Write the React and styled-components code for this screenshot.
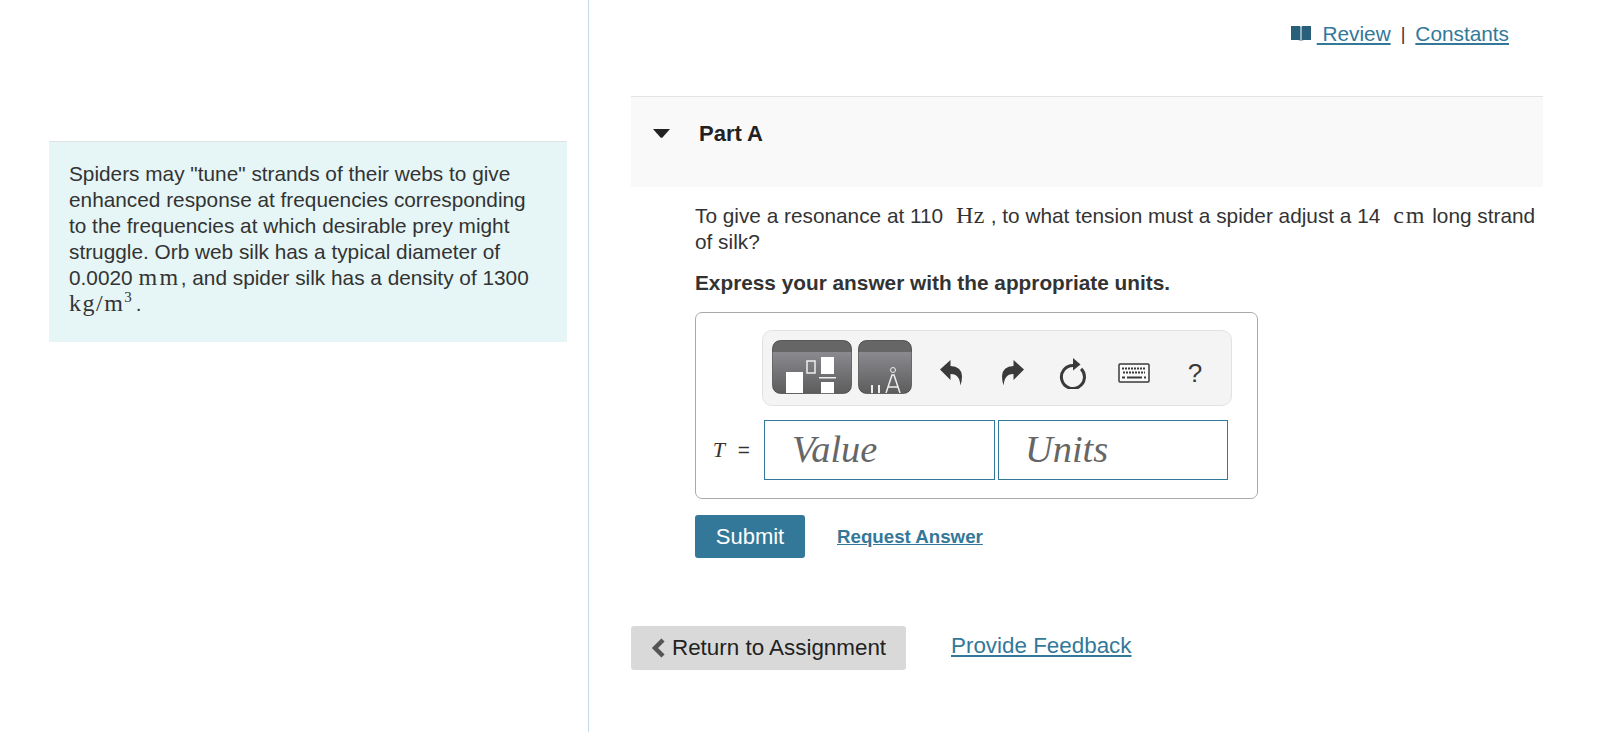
import React from 'react'
import styled, { createGlobalStyle } from 'styled-components'

const GlobalStyle = createGlobalStyle`
  html, body {
    margin: 0;
    padding: 0;
    background: #fff;
  }
  body {
    font-family: "Liberation Sans", Arial, sans-serif;
    font-size: 20.8px;
    line-height: 26px;
    color: #333;
  }
`

const Page = styled.div`
  display: flex;
  height: 732px;
  overflow: hidden;
`

const LeftColumn = styled.aside`
  box-sizing: border-box;
  width: 589px;
  flex: none;
  padding: 141px 21px 0 49px;
  border-right: 1px solid #c4d8e8;
`

const IntroPanel = styled.div`
  box-sizing: border-box;
  height: 201px;
  padding: 19px 20px 0;
  background: #e6f6f6;
  border-top: 1px solid #dfe3e3;
`

const Math = styled.span`
  font-family: "Liberation Serif", serif;
  font-size: 24px;
  line-height: 1;
  letter-spacing: ${p => p.$track ?? 1.5}px;
  margin-left: ${p => p.$lead || 0}px;
  sup {
    font-size: 15px;
    line-height: 0;
    letter-spacing: 0;
    margin-right: 4px;
  }
`

const RightColumn = styled.main`
  flex: 1;
  min-width: 0;
  padding: 21px 57px 0 42px;
`

const TopLinks = styled.div`
  display: flex;
  justify-content: flex-end;
  align-items: center;
  height: 26px;
  padding-right: 34px;
  margin-bottom: 49px;
`

const LinkSep = styled.span`
  margin: 0 10px;
  font-size: 18px;
`

const TextLink = styled.a`
  color: #337899;
  font-size: ${p => p.$size || 20.8}px;
  font-weight: ${p => (p.$bold ? 700 : 400)};
  text-decoration: underline;
  white-space: pre;
`

const PartHeader = styled.div`
  box-sizing: border-box;
  display: flex;
  align-items: flex-start;
  height: 91px;
  background: #f9f9f9;
  border-top: 1px solid #e3e3e3;
  padding: 24px 0 0 22px;
`

const PartTitle = styled.h2`
  margin: 0 0 0 29px;
  font-size: 22px;
  line-height: 26px;
  font-weight: 700;
  color: #222;
`

const PartBody = styled.section`
  padding: 16px 0 0 64px;
`

const Question = styled.p`
  margin: 0 0 15px;
`

const Instruction = styled.p`
  margin: 0 0 16px;
  font-weight: 700;
`

const AnswerBox = styled.div`
  box-sizing: border-box;
  width: 563px;
  height: 187px;
  padding: 17px 0 0;
  border: 1px solid #aaa;
  border-radius: 7px;
`

const Toolbar = styled.div`
  box-sizing: border-box;
  display: flex;
  align-items: flex-start;
  width: 470px;
  height: 76px;
  margin-left: 66px;
  padding: 9px 0 0 9px;
  background: #f4f4f4;
  border: 1px solid #e2e2e2;
  border-radius: 10px;
`

const TemplateButton = styled.button`
  display: block;
  flex: none;
  width: ${p => p.$width}px;
  height: 54px;
  margin: 0 ${p => p.$after}px 0 0;
  padding: 0;
  border: 0;
  background: none;
  svg {
    display: block;
  }
`

const ToolIcon = styled.button`
  display: flex;
  align-items: center;
  justify-content: center;
  flex: none;
  width: ${p => p.$width || 60}px;
  height: 50px;
  margin: 8px 0 0;
  padding: 0;
  border: 0;
  background: none;
  color: #3a3a3a;
  font-family: "Liberation Sans", Arial, sans-serif;
  font-size: 26px;
`

const InputRow = styled.div`
  display: flex;
  align-items: center;
  margin-top: 14px;
`

const VarLabel = styled.div`
  box-sizing: border-box;
  width: 68px;
  padding-right: 14px;
  text-align: right;
  white-space: nowrap;
  em {
    font-family: "Liberation Serif", serif;
    font-size: 22px;
    margin-right: 7px;
  }
`

const Field = styled.div`
  box-sizing: border-box;
  width: ${p => p.$width}px;
  height: 60px;
  margin-right: 3px;
  padding-left: ${p => p.$indent}px;
  border: 1px solid #337899;
  font-family: "Liberation Serif", serif;
  font-style: italic;
  font-size: 38.4px;
  line-height: 57px;
  color: #666;
`

const ActionRow = styled.div`
  display: flex;
  align-items: center;
  margin-top: 16px;
`

const SubmitButton = styled.button`
  width: 110px;
  height: 43px;
  margin-right: 32px;
  padding: 0;
  border: 0;
  border-radius: 3px;
  background: #337899;
  color: #fff;
  font-family: "Liberation Sans", Arial, sans-serif;
  font-size: 22px;
`

const FooterRow = styled.div`
  display: flex;
  align-items: flex-start;
  margin-top: 68px;
`

const ReturnButton = styled.button`
  display: flex;
  align-items: center;
  box-sizing: border-box;
  width: 275px;
  height: 44px;
  margin-right: 45px;
  padding: 0 0 0 20px;
  border: 0;
  border-radius: 3px;
  background: #d9d9d9;
  color: #222;
  font-family: "Liberation Sans", Arial, sans-serif;
  font-size: 22.4px;
  svg {
    margin-right: 6px;
  }
`

const FeedbackWrap = styled.div`
  padding-top: 7px;
`

const BookIcon = () => (
  <svg width="20" height="16" viewBox="0 0 20 16" style={{ marginRight: 6 }}>
    <path d="M0 0h8.500q1 0 1 1v14q-1-1-2.500-1H0zM20 0h-8.500q-1 0-1 1v14q1-1 2.500-1H20z" fill="#28607c" />
  </svg>
)

const MatrixTemplate = () => (
  <svg width="80" height="54" viewBox="0 0 80 54">
    <defs>
      <linearGradient id="btnA" x1="0" y1="0" x2="0" y2="1">
        <stop offset="0" stopColor="#97979e" />
        <stop offset="1" stopColor="#5c5c5c" />
      </linearGradient>
      <clipPath id="clipA">
        <rect x="0.5" y="0.5" width="79" height="53" rx="8" />
      </clipPath>
    </defs>
    <g clipPath="url(#clipA)">
      <rect width="80" height="54" fill="url(#btnA)" />
      <rect width="80" height="12" fill="#666" />
      <rect x="14" y="32" width="17" height="21" fill="#fff" />
      <rect x="35" y="21" width="8" height="12" fill="none" stroke="#eee" strokeWidth="1.500" />
      <rect x="49" y="17" width="13" height="17" fill="#fff" />
      <rect x="47" y="37" width="17" height="1.500" fill="#eee" />
      <rect x="49" y="42" width="13" height="12" fill="#fff" />
    </g>
    <rect x="0.5" y="0.5" width="79" height="53" rx="8" fill="none" stroke="#333" strokeOpacity="0.6" />
  </svg>
)

const UnitTemplate = () => (
  <svg width="54" height="54" viewBox="0 0 54 54">
    <defs>
      <linearGradient id="btnB" x1="0" y1="0" x2="0" y2="1">
        <stop offset="0" stopColor="#97979e" />
        <stop offset="1" stopColor="#5c5c5c" />
      </linearGradient>
      <clipPath id="clipB">
        <rect x="0.5" y="0.5" width="53" height="53" rx="8" />
      </clipPath>
    </defs>
    <g clipPath="url(#clipB)">
      <rect width="54" height="54" fill="url(#btnB)" />
      <rect width="54" height="12" fill="#666" />
      <rect x="13" y="45" width="2" height="9" fill="#eee" />
      <rect x="20" y="45" width="2" height="9" fill="#eee" />
      <circle cx="35" cy="30" r="2.500" fill="none" stroke="#eee" />
      <path d="M28 53l6-18h2l6 18M30.500 47h9" fill="none" stroke="#eee" strokeWidth="1.500" />
    </g>
    <rect x="0.5" y="0.5" width="53" height="53" rx="8" fill="none" stroke="#333" strokeOpacity="0.6" />
  </svg>
)

const UndoIcon = ({ flip }) => (
  <svg width="23" height="26" viewBox="0 0 23 26" style={flip ? { transform: 'scaleX(-1)' } : undefined}>
    <path d="M0 9.500L10.500 0v6q11 .5 11.500 10 0 5-1.500 9.500q-1-8.500-5-10.500-2-1-5-1v6z" fill="#3a3a3a" />
  </svg>
)

const ReloadIcon = () => (
  <svg width="28" height="31" viewBox="0 0 28 31">
    <path d="M14 6.500A11.500 11.500 0 1 0 22.100 9.900" fill="none" stroke="#3a3a3a" strokeWidth="3" transform="translate(0 1)" />
    <path d="M14 0l7.500 6.500L14 12.500z" fill="#3a3a3a" />
  </svg>
)

const KeyboardIcon = () => (
  <svg width="32" height="20" viewBox="0 0 32 20">
    <rect x="1" y="1" width="30" height="18" rx="1" fill="#fafafa" stroke="#3a3a3a" strokeWidth="1.500" />
    <path d="M4 5.500h24" stroke="#3a3a3a" strokeWidth="2" strokeDasharray="2 1" />
    <path d="M5 9.500h22" stroke="#3a3a3a" strokeWidth="2" strokeDasharray="2 1" />
    <path d="M4 14.500h3M9 14.500h15M26 14.500h2" stroke="#3a3a3a" strokeWidth="2" />
  </svg>
)

const Caret = () => (
  <svg width="17" height="9" viewBox="0 0 17 9" style={{ marginTop: 8 }}>
    <path d="M0 0h17L9.500 8.500q-1 .5-2 0z" fill="#222" />
  </svg>
)

const Chevron = () => (
  <svg width="15" height="20" viewBox="0 0 15 20">
    <path d="M12 2L4 10l8 8" fill="none" stroke="#555" strokeWidth="4.500" />
  </svg>
)

export default function App() {
  return (
    <Page>
      <GlobalStyle />
      <LeftColumn>
        <IntroPanel>
          Spiders may "tune" strands of their webs to give enhanced response at
          frequencies corresponding to the frequencies at which desirable prey
          might struggle. Orb web silk has a typical diameter of 0.0020{' '}
          <Math $track={2.5}>mm</Math>, and spider silk has a density of 1300{' '}
          <Math>kg/m<sup>3</sup></Math>.
        </IntroPanel>
      </LeftColumn>
      <RightColumn>
        <TopLinks>
          <BookIcon />
          <TextLink href="#"> Review</TextLink>
          <LinkSep>|</LinkSep>
          <TextLink href="#">Constants</TextLink>
        </TopLinks>
        <PartHeader>
          <Caret />
          <PartTitle>Part A</PartTitle>
        </PartHeader>
        <PartBody>
          <Question>
            To give a resonance at 110 <Math $lead={7} $track={0.5}>Hz</Math> , to what tension
            must a spider adjust a 14 <Math $lead={7} $track={2}>cm</Math> long strand of silk?
          </Question>
          <Instruction>Express your answer with the appropriate units.</Instruction>
          <AnswerBox>
            <Toolbar>
              <TemplateButton $width={80} $after={6}><MatrixTemplate /></TemplateButton>
              <TemplateButton $width={54} $after={8}><UnitTemplate /></TemplateButton>
              <ToolIcon $width={62}><UndoIcon /></ToolIcon>
              <ToolIcon $width={61}><UndoIcon flip /></ToolIcon>
              <ToolIcon $width={60}><ReloadIcon /></ToolIcon>
              <ToolIcon $width={62}><KeyboardIcon /></ToolIcon>
              <ToolIcon $width={60}>?</ToolIcon>
            </Toolbar>
            <InputRow>
              <VarLabel><em>T</em> =</VarLabel>
              <Field $width={231} $indent={27}>Value</Field>
              <Field $width={230} $indent={26}>Units</Field>
            </InputRow>
          </AnswerBox>
          <ActionRow>
            <SubmitButton>Submit</SubmitButton>
            <TextLink href="#" $bold $size={18.72}>Request Answer</TextLink>
          </ActionRow>
        </PartBody>
        <FooterRow>
          <ReturnButton><Chevron />Return to Assignment</ReturnButton>
          <FeedbackWrap>
            <TextLink href="#" $size={22.4}>Provide Feedback</TextLink>
          </FeedbackWrap>
        </FooterRow>
      </RightColumn>
    </Page>
  )
}
